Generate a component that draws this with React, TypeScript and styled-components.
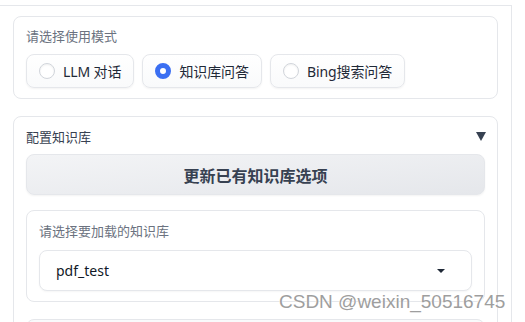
import React, { useState } from 'react'
import styled, { createGlobalStyle } from 'styled-components'

const GlobalStyle = createGlobalStyle`
  body {
    margin: 0;
    background: #ffffff;
    font-family: 'Noto Sans', 'Noto Sans CJK SC', sans-serif;
  }
`

const modes = ['LLM 对话', '知识库问答', 'Bing搜索问答']

const App = () => {
  const [mode, setMode] = useState('知识库问答')

  return (
    <>
      <GlobalStyle />
      <Page>
        <Column>
          <Block>
            <BlockLabel>请选择使用模式</BlockLabel>
            <RadioRow>
              {modes.map((item) => (
                <RadioLabel key={item} onClick={() => setMode(item)}>
                  <RadioDot checked={mode === item} />
                  <RadioText>{item}</RadioText>
                </RadioLabel>
              ))}
            </RadioRow>
          </Block>

          <Block>
            <AccordionHeader>
              <HeaderText>配置知识库</HeaderText>
              <HeaderArrow />
            </AccordionHeader>
            <SecondaryButton>更新已有知识库选项</SecondaryButton>
            <InnerBlock>
              <BlockLabel>请选择要加载的知识库</BlockLabel>
              <Dropdown>
                <DropdownValue>pdf_test</DropdownValue>
                <Caret />
              </Dropdown>
            </InnerBlock>
            <NextBlock />
          </Block>
        </Column>
        <Watermark>CSDN @weixin_50516745</Watermark>
      </Page>
    </>
  )
}

const Page = styled.div`
  position: relative;
  width: 525px;
  height: 322px;
  overflow: hidden;
  padding-top: 5px;
  box-sizing: border-box;
`

const Column = styled.div`
  width: 512px;
  box-sizing: border-box;
  border-top: 1px solid #e5e7eb;
  border-right: 1px solid #e5e7eb;
  padding: 10px 13px 0 13px;
  display: flex;
  flex-direction: column;
  gap: 17px;
  height: 330px;
`

const Block = styled.div`
  border: 1px solid #e5e7eb;
  border-radius: 8px;
  background: #ffffff;
  padding: 9px 12px 10px 12px;
  display: flex;
  flex-direction: column;
`

const BlockLabel = styled.div`
  font-size: 13px;
  line-height: 20px;
  color: #6b7280;
  margin-bottom: 8px;
`

const RadioRow = styled.div`
  display: flex;
  gap: 8px;
`

const RadioLabel = styled.label`
  display: flex;
  align-items: center;
  height: 34px;
  box-sizing: border-box;
  padding: 0 12px;
  border: 1px solid #e5e7eb;
  border-radius: 8px;
  background: linear-gradient(to top, #f9fafb, #ffffff);
  box-shadow: 0 1px 2px rgba(0, 0, 0, 0.05);
  cursor: pointer;
`

const RadioDot = styled.span<{ checked: boolean }>`
  width: 16px;
  height: 16px;
  box-sizing: border-box;
  border-radius: 50%;
  background: #ffffff;
  border: ${(p) => (p.checked ? '5px solid #3b6ff2' : '1px solid #d1d5db')};
  box-shadow: ${(p) => (p.checked ? 'none' : 'inset 0 1px 2px rgba(0, 0, 0, 0.06)')};
  margin-right: 8px;
  flex-shrink: 0;
`

const RadioText = styled.span`
  font-size: 14px;
  letter-spacing: -0.1px;
  color: #1f2937;
`

const AccordionHeader = styled.div`
  display: flex;
  justify-content: space-between;
  align-items: center;
  height: 20px;
  margin-bottom: 8px;
`

const HeaderText = styled.span`
  font-size: 13px;
  color: #374151;
`

const HeaderArrow = styled.span`
  width: 0;
  height: 0;
  border-left: 5px solid transparent;
  border-right: 5px solid transparent;
  border-top: 9px solid #374151;
  margin-right: -1px;
`

const SecondaryButton = styled.button`
  height: 41px;
  border: 1px solid #e5e7eb;
  border-radius: 8px;
  background: linear-gradient(to bottom right, #f3f4f6, #e5e7eb);
  box-shadow: 0 1px 2px rgba(0, 0, 0, 0.05);
  font-family: 'Noto Sans', 'Noto Sans CJK SC', sans-serif;
  font-size: 16px;
  font-weight: 700;
  color: #374151;
  margin-bottom: 15px;
  cursor: pointer;
`

const InnerBlock = styled(Block)`
  padding: 10px 12px 10px 12px;

  & > ${BlockLabel} {
    margin-bottom: 9px;
  }
`

const Dropdown = styled.div`
  height: 41px;
  box-sizing: border-box;
  border: 1px solid #e5e7eb;
  border-radius: 8px;
  background: #ffffff;
  box-shadow: 0 1px 2px rgba(0, 0, 0, 0.04);
  display: flex;
  align-items: center;
  justify-content: space-between;
  padding: 0 26px 0 16px;
`

const DropdownValue = styled.span`
  font-size: 14px;
  color: #111827;
`

const Caret = styled.span`
  width: 0;
  height: 0;
  border-left: 4px solid transparent;
  border-right: 4px solid transparent;
  border-top: 4px solid #1f2937;
`

const NextBlock = styled.div`
  margin-top: 17px;
  height: 40px;
  border: 1px solid #e5e7eb;
  border-radius: 8px;
  background: #f9fafb;
`

const Watermark = styled.div`
  position: absolute;
  left: 279px;
  top: 291px;
  font-family: 'Liberation Sans', Arial, sans-serif;
  font-size: 19px;
  color: #9e9e9e;
  text-shadow: 0 0 1px #ffffff, 0 0 2px #ffffff;
  pointer-events: none;
  white-space: nowrap;
`

export default App
